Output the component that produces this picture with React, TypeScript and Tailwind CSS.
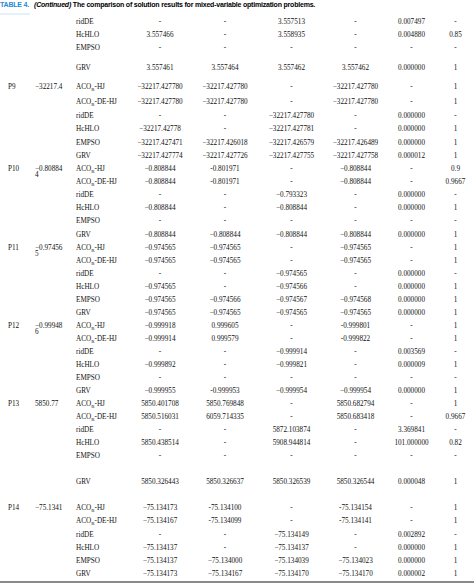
import React from "react";

type Row = {
  p?: string;
  opt?: string;
  name: string;
  v: string[];
  mt?: string;
};

const M = "\u2212";

const rows: Row[] = [
  { name: "ridDE", v: ["-", "-", "3.557513", "-", "0.007497", "-"] },
  { name: "HcHLO", v: ["3.557466", "-", "3.558935", "-", "0.004880", "0.85"] },
  { name: "EMPSO", v: ["-", "-", "-", "-", "-", "-"] },
  { name: "GRV", v: ["3.557461", "3.557464", "3.557462", "3.557462", "0.000000", "1"], mt: "mt-[7px]" },

  { p: "P9", opt: `${M}32217.4`, name: "ACO-HJ", v: [`${M}32217.427780`, `${M}32217.427780`, "-", `${M}32217.427780`, "-", "1"], mt: "mt-[6px]" },
  { name: "ACO-DE-HJ", v: [`${M}32217.427780`, `${M}32217.427780`, "-", `${M}32217.427780`, "-", "1"], mt: "mt-[2px]" },
  { name: "ridDE", v: ["-", "-", `${M}32217.427780`, "-", "0.000000", "-"], mt: "mt-[1px]" },
  { name: "HcHLO", v: [`${M}32217.42778`, "-", `${M}32217.427781`, "-", "0.000000", "1"] },
  { name: "EMPSO", v: [`${M}32217.427471`, `${M}32217.426018`, `${M}32217.426579`, `${M}32217.426489`, "0.000000", "1"], mt: "mt-[1px]" },
  { name: "GRV", v: [`${M}32217.427774`, `${M}32217.427726`, `${M}32217.427755`, `${M}32217.427758`, "0.000012", "1"] },

  { p: "P10", opt: `${M}0.808844`, name: "ACO-HJ", v: [`${M}0.808844`, "-0.801971", "-", `${M}0.808844`, "-", "0.9"] },
  { name: "ACO-DE-HJ", v: [`${M}0.808844`, "-0.801971", "-", `${M}0.808844`, "-", "0.9667"] },
  { name: "ridDE", v: ["-", "-", `${M}0.793323`, "-", "0.000000", "-"] },
  { name: "HcHLO", v: [`${M}0.808844`, "-", `${M}0.808844`, "-", "0.000000", "1"] },
  { name: "EMPSO", v: ["-", "-", "-", "-", "-", "-"] },
  { name: "GRV", v: [`${M}0.808844`, `${M}0.808844`, `${M}0.808844`, `${M}0.808844`, "0.000000", "1"], mt: "mt-[1px]" },

  { p: "P11", opt: `${M}0.974565`, name: "ACO-HJ", v: [`${M}0.974565`, `${M}0.974565`, "-", `${M}0.974565`, "-", "1"] },
  { name: "ACO-DE-HJ", v: [`${M}0.974565`, `${M}0.974565`, "-", `${M}0.974565`, "-", "1"] },
  { name: "ridDE", v: ["-", "-", `${M}0.974565`, "-", "0.000000", "-"] },
  { name: "HcHLO", v: [`${M}0.974565`, "-", `${M}0.974566`, "-", "0.000000", "1"] },
  { name: "EMPSO", v: [`${M}0.974565`, `${M}0.974566`, `${M}0.974567`, `${M}0.974568`, "0.000000", "1"] },
  { name: "GRV", v: [`${M}0.974565`, `${M}0.974565`, `${M}0.974565`, `${M}0.974565`, "0.000000", "1"] },

  { p: "P12", opt: `${M}0.999486`, name: "ACO-HJ", v: [`${M}0.999918`, "0.999605", "-", "-0.999801", "-", "1"] },
  { name: "ACO-DE-HJ", v: [`${M}0.999914`, "0.999579", "-", "-0.999822", "-", "1"] },
  { name: "ridDE", v: ["-", "-", `${M}0.999914`, "-", "0.003569", "-"] },
  { name: "HcHLO", v: [`${M}0.999892`, "-", `${M}0.999821`, "-", "0.000009", "1"] },
  { name: "EMPSO", v: ["-", "-", "-", "-", "-", "-"] },
  { name: "GRV", v: [`${M}0.999955`, "-0.999953", `${M}0.999954`, `${M}0.999954`, "0.000000", "1"] },

  { p: "P13", opt: "5850.77", name: "ACO-HJ", v: ["5850.401708", "5850.769848", "-", "5850.682794", "-", "1"] },
  { name: "ACO-DE-HJ", v: ["5850.516031", "6059.714335", "-", "5850.683418", "-", "0.9667"] },
  { name: "ridDE", v: ["-", "-", "5872.103874", "-", "3.369841", "-"] },
  { name: "HcHLO", v: ["5850.438514", "-", "5908.944814", "-", "101.000000", "0.82"] },
  { name: "EMPSO", v: ["-", "-", "-", "-", "-", "-"] },
  { name: "GRV", v: ["5850.326443", "5850.326637", "5850.326539", "5850.326544", "0.000048", "1"], mt: "mt-[13px]" },

  { p: "P14", opt: `${M}75.1341`, name: "ACO-HJ", v: [`${M}75.134173`, "-75.134100", "-", "-75.134154", "-", "1"], mt: "mt-[13px]" },
  { name: "ACO-DE-HJ", v: [`${M}75.134167`, "-75.134099", "-", "-75.134141", "-", "1"] },
  { name: "ridDE", v: ["-", "-", `${M}75.134149`, "-", "0.002892", "-"], mt: "mt-[1px]" },
  { name: "HcHLO", v: [`${M}75.134137`, "-", `${M}75.134137`, "-", "0.000000", "1"] },
  { name: "EMPSO", v: [`${M}75.134137`, `${M}75.134000`, `${M}75.134039`, `${M}75.134023`, "0.000000", "1"] },
  { name: "GRV", v: [`${M}75.134173`, `${M}75.134167`, `${M}75.134170`, `${M}75.134170`, "0.000002", "1"] },
];

const AlgName = ({ name }: { name: string }) => {
  if (name.startsWith("ACO")) {
    return (
      <span>
        ACO<sub className="text-[5px] align-baseline relative top-[1.5px]">R</sub>
        {name.slice(3)}
      </span>
    );
  }
  return <span>{name}</span>;
};

export default function App() {
  return (
    <div className="w-[474px] h-[583px] overflow-hidden bg-white text-black">
      {/* Caption */}
      <div className="h-[16px]">
        <div className="whitespace-nowrap pt-[1px] text-[7px] leading-[8px] tracking-[-0.2px] font-bold text-black font-['Liberation_Sans_Narrow','Liberation_Sans',sans-serif]">
          <span className="text-[#1f8ad2]">TABLE 4.</span>
          <span className="italic ml-[5px]">(Continued)</span> The comparison of solution results for mixed-variable optimization problems.
        </div>
        <div className="w-[30px] h-[2px] mt-[4px] bg-[#e3f1fb]" />
      </div>

      {/* Table body */}
      <div className="font-['Liberation_Serif',serif] text-[7.2px] text-[#111]">
        {rows.map((r, i) => (
          <div
            key={i}
            className={`grid grid-cols-[35px_41px_52px_64px_66px_67px_61px_51px_37px] h-[13px] leading-[13px] whitespace-nowrap ${r.mt ?? ""}`}
          >
            <div className="pl-[8px]">{r.p}</div>
            <div>
              {r.opt && (
                <div className="w-[29px] break-all whitespace-normal leading-[5.5px] pt-[4px]">
                  {r.opt}
                </div>
              )}
            </div>
            <div>
              <AlgName name={r.name} />
            </div>
            {r.v.map((val, j) => (
              <div key={j} className="text-center">
                {val}
              </div>
            ))}
          </div>
        ))}
        <div className="h-[3px] bg-[#8a8a8a]" />
      </div>
    </div>
  );
}
